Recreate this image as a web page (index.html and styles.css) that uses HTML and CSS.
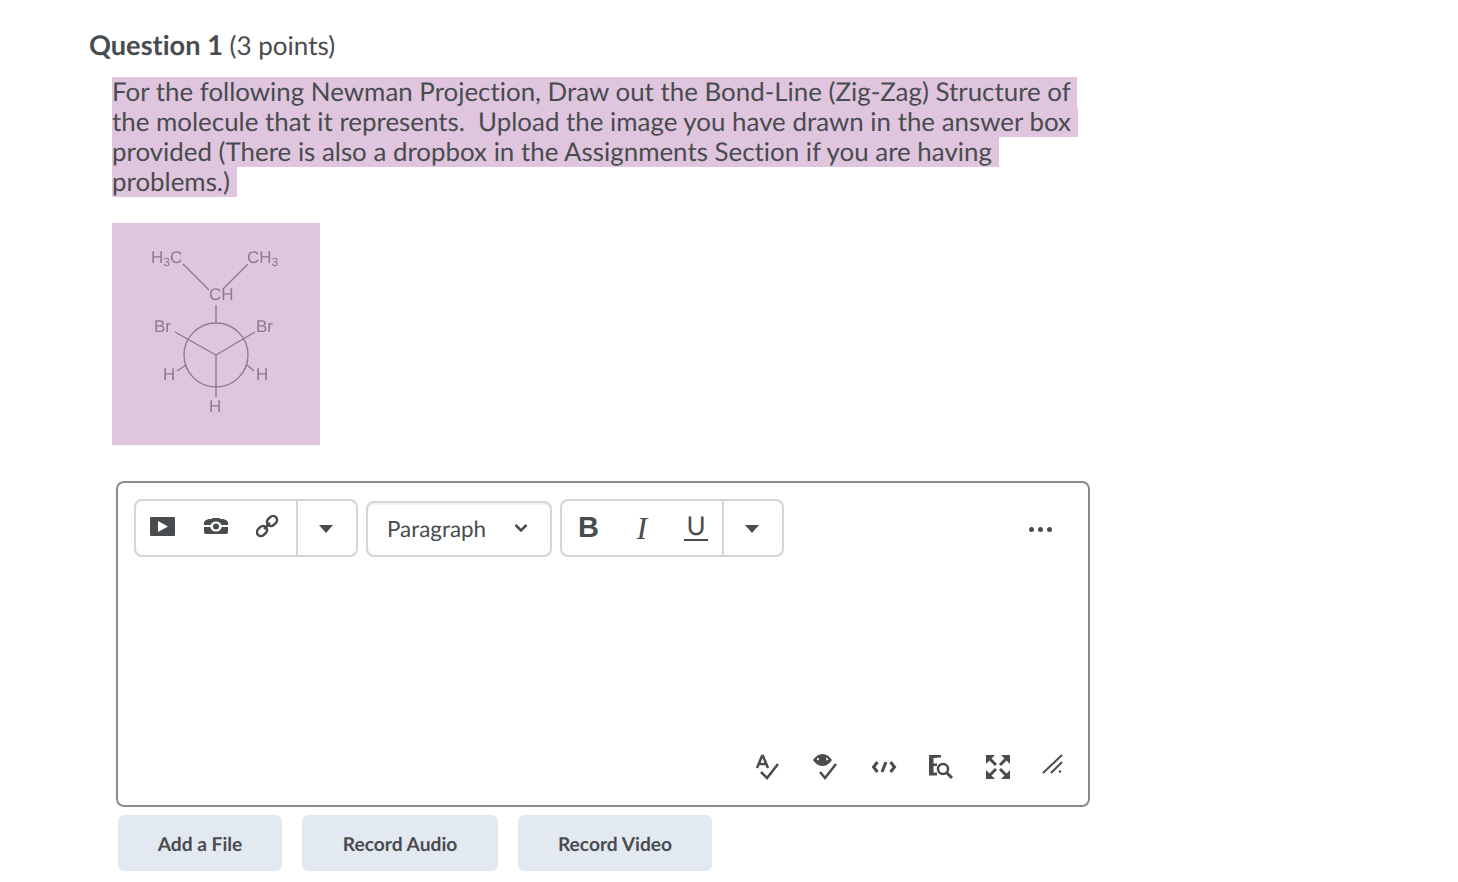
FILE: index.html
```html
<!DOCTYPE html>
<html lang="en">
<head>
    <meta charset="UTF-8">
    <title>Question 1</title>
    <link rel="stylesheet" href="styles.css">
</head>
<body>
    <div class="container">
        <h1 class="question-title"><strong>Question 1</strong> (3 points)</h1>

        <div class="question-body">
            <p class="prompt">
                <span class="hl-line">For the following Newman Projection, Draw out the Bond-Line (Zig-Zag) Structure of&nbsp;</span>
                <span class="hl-line">the molecule that it represents.&nbsp; Upload the image you have drawn in the answer box&nbsp;</span>
                <span class="hl-line">provided (There is also a dropbox in the Assignments Section if you are having&nbsp;</span>
                <span class="hl-line">problems.)&nbsp;</span>
            </p>

            <div class="molecule">
                <svg class="molecule-svg" width="208" height="222" viewBox="0 0 208 222">
                    <g class="bonds">
                        <circle cx="104" cy="132" r="32"/>
                        <path d="M104 132V174M104 82V100M63 109L104 132L143 109M65 148L74 142M142 148L135 142M71 41L97 67M136 41L111 66"/>
                    </g>
                    <g class="atoms">
                        <text x="39" y="40">H<tspan class="sub" dy="3">3</tspan><tspan dy="-3">C</tspan></text>
                        <text x="135" y="40">CH<tspan class="sub" dy="3">3</tspan></text>
                        <text x="97" y="77">CH</text>
                        <text x="42" y="109">Br</text>
                        <text x="144" y="109">Br</text>
                        <text x="51" y="157">H</text>
                        <text x="144" y="157">H</text>
                        <text x="97" y="189">H</text>
                    </g>
                </svg>
            </div>

            <div class="editor">
                <div class="toolbar">
                    <div class="tool-group">
                        <span class="tool">
                            <svg width="26" height="20" viewBox="0 0 26 20"><path class="fill" fill-rule="evenodd" d="M1 1H24a1 1 0 0 1 1 1V19a1 1 0 0 1-1 1H1a1 1 0 0 1-1-1V2a1 1 0 0 1 1-1ZM8 5V16L18 10.500Z"/></svg>
                        </span>
                        <span class="tool">
                            <svg width="26" height="20" viewBox="0 0 26 20"><path class="fill" fill-rule="evenodd" d="M6 3H9V2H17V3H20L23 4Q25 5 25 7V9H18.500A6 6 0 0 0 7.500 9H1V7Q1 5 3 4ZM1 11H7.200A6 6 0 0 0 18.800 11H25V16Q25 18 23 18H3Q1 18 1 16ZM13 7.500A3 3 0 1 0 13 13.500A3 3 0 1 0 13 7.500Z"/></svg>
                        </span>
                        <span class="tool">
                            <svg width="26" height="26" viewBox="0 0 26 26"><g class="line"><rect x="0.500" y="14" width="11" height="8" rx="4" transform="rotate(-45 6 18)"/><rect x="10.500" y="4" width="11" height="8" rx="4" transform="rotate(-45 16 8)"/><path d="M8 16L14 10"/></g></svg>
                        </span>
                        <span class="tool-sep"></span>
                        <span class="tool-more"><span class="caret"></span></span>
                    </div>

                    <div class="format-select">
                        <span>Paragraph</span>
                        <svg width="14" height="10" viewBox="0 0 14 10"><path class="line" d="M1.500 2L7 7.500L12.500 2"/></svg>
                    </div>

                    <div class="tool-group">
                        <span class="tool tool-text"><b class="btn-b">B</b></span>
                        <span class="tool tool-text"><i class="btn-i">I</i></span>
                        <span class="tool"><span class="btn-u">U</span></span>
                        <span class="tool-sep"></span>
                        <span class="tool-more"><span class="caret"></span></span>
                    </div>

                    <div class="toolbar-end">
                        <span class="dot"></span><span class="dot"></span><span class="dot"></span>
                    </div>
                </div>

                <div class="edit-area"></div>

                <div class="status-bar">
                    <span class="status-tool">
                        <svg width="26" height="26" viewBox="0 0 26 26"><path class="line" d="M2 14L7 2H8L13 14M4 10H11"/><path class="line" d="M6 18L12 24L23 10"/></svg>
                    </span>
                    <span class="status-tool">
                        <svg width="26" height="26" viewBox="0 0 26 26"><path class="fill" fill-rule="evenodd" d="M1 6Q5 0 10.500 0Q16 0 20 6Q16 12 10.500 12Q5 12 1 6ZM4.500 5.500Q5.500 4 7 3.500Q6.500 5 7 6.500ZM16.500 5.500Q15.500 4 14 3.500Q14.500 5 14 6.500Z"/><path class="line" d="M8 18L13 24L24 10"/></svg>
                    </span>
                    <span class="status-tool status-code">
                        <svg width="26" height="14" viewBox="0 0 26 14"><path class="line heavy" d="M5.500 2L1.500 7L5.500 12M18.500 2L22.500 7L18.500 12M14 2L10 12"/></svg>
                    </span>
                    <span class="status-tool status-find">
                        <svg width="26" height="26" viewBox="0 0 26 26"><path class="fill" d="M1 1H13V3.500H9V4H5.500V9.500H9V12H5.500V18.500H9V21.500H1Z"/><circle class="line" cx="15" cy="15" r="5"/><path class="line heavy" d="M19 19L24 24"/></svg>
                    </span>
                    <span class="status-tool status-full">
                        <svg width="26" height="26" viewBox="0 0 26 26"><path class="fill" d="M1 1H10L1 10ZM25 1H16L25 10ZM1 25H10L1 16ZM25 25H16L25 16Z"/><path class="line heavy" d="M3 3L11 11M23 3L15 11M3 23L11 15M23 23L15 15"/></svg>
                    </span>
                    <span class="status-tool status-resize">
                        <svg width="24" height="24" viewBox="0 0 24 24"><path class="line thin" d="M2 21L21 3M10 21L21 10"/><path class="line thin" d="M18 20L20 19"/></svg>
                    </span>
                </div>
            </div>

            <div class="attach-buttons">
                <button class="attach-btn btn-file" type="button">Add a File</button>
                <button class="attach-btn btn-audio" type="button">Record Audio</button>
                <button class="attach-btn btn-video" type="button">Record Video</button>
            </div>
        </div>
    </div>
</body>
</html>
```

FILE: styles.css
```css
body {
    font-family: Lato, "Open Sans", sans-serif;
    font-variant-ligatures: none;
    text-rendering: geometricPrecision;
    margin: 0;
    color: #494c4e;
    background-color: white;
}
.container {
    padding: 27px 0 0 89px;
}
.question-title {
    margin: 0;
    font-size: 26px;
    line-height: 36px;
    font-weight: 400;
}
.question-title strong {
    font-size: 27.200px;
    font-weight: 700;
}
.question-body {
    padding-left: 23px;
}
.prompt {
    margin: 14px 0 0;
    font-size: 25.900px;
    line-height: 30px;
}
.hl-line {
    display: block;
    width: fit-content;
    height: 30px;
    line-height: 28px;
    background-color: #dfc5de;
}
.molecule {
    width: 208px;
    height: 222px;
    margin-top: 26px;
    background-color: #dfc5de;
}
.molecule-svg {
    display: block;
    filter: blur(0.4px);
}
.bonds {
    fill: none;
    stroke: #8f7a90;
    stroke-width: 1.4;
}
.atoms {
    font-family: "Liberation Sans", Arial, sans-serif;
    font-size: 17px;
    fill: #8f7a90;
}
.sub {
    font-size: 12px;
}

/* editor */
.editor {
    display: flex;
    flex-direction: column;
    box-sizing: border-box;
    width: 974px;
    height: 326px;
    margin: 36px 0 0 4px;
    border: 2px solid #868c90;
    border-radius: 8px;
}
.toolbar {
    display: flex;
    align-items: flex-start;
    gap: 8px;
    padding: 16px 16px 0;
}
.tool-group {
    display: flex;
    width: 224px;
    height: 58px;
    box-sizing: border-box;
    border: 2px solid #d3d5d6;
    border-radius: 8px;
}
.tool {
    display: flex;
    align-items: center;
    justify-content: center;
    flex: 0 0 53.200px;
    padding-bottom: 4px;
    box-sizing: border-box;
}
.tool-text {
    padding-bottom: 0;
}
.tool-sep {
    width: 2px;
    background-color: #d3d5d6;
}
.tool-more {
    display: flex;
    flex: 1;
    align-items: center;
    justify-content: center;
    padding: 1px 1px 0 0;
}
.caret {
    width: 0;
    height: 0;
    border-left: 7px solid transparent;
    border-right: 7px solid transparent;
    border-top: 8px solid #494c4e;
}
.btn-b {
    font-family: "Liberation Sans", Arial, sans-serif;
    font-weight: 700;
    font-size: 29px;
}
.btn-i {
    font-family: "Liberation Serif", serif;
    font-size: 32px;
}
.btn-u {
    font-size: 26px;
    line-height: 28px;
    border-bottom: 2px solid #494c4e;
    padding: 0 2px;
    margin-left: 2px;
}
.format-select {
    display: flex;
    align-items: center;
    justify-content: space-between;
    box-sizing: border-box;
    width: 186px;
    height: 56px;
    margin-top: 2px;
    padding: 0 22px 2px 19px;
    border: 2px solid #d3d5d6;
    border-radius: 8px;
    box-shadow: inset 0 2px 0 #f1f3f5;
    font-size: 22.400px;
}
.toolbar-end {
    display: flex;
    gap: 4px;
    margin: 28px 20px 0 auto;
}
.dot {
    width: 5px;
    height: 5px;
    border-radius: 50%;
    background-color: #494c4e;
}
.edit-area {
    flex: 1;
}
.status-bar {
    display: flex;
    justify-content: flex-end;
    align-items: center;
    height: 30px;
    padding: 0 7px 23px 0;
}
.status-tool {
    display: flex;
    justify-content: center;
    width: 57px;
}
.status-code {
    padding-left: 6px;
    box-sizing: border-box;
}
.status-find {
    padding-left: 4px;
    box-sizing: border-box;
}
.status-full {
    padding-left: 4px;
    box-sizing: border-box;
}
.status-resize {
    padding-bottom: 6px;
    box-sizing: border-box;
}
.fill {
    fill: #494c4e;
}
.line {
    fill: none;
    stroke: #494c4e;
    stroke-width: 2.500;
}
.line.thin {
    stroke-width: 2;
}
.line.heavy {
    stroke-width: 3;
}

/* attachments */
.attach-buttons {
    display: flex;
    gap: 20px;
    margin: 8px 0 0 6px;
}
.attach-btn {
    height: 56px;
    padding: 2px 0 0;
    border: none;
    border-radius: 6px;
    background-color: #e3e9f1;
    color: #494c4e;
    font-family: Lato, sans-serif;
    font-variant-ligatures: none;
    text-rendering: geometricPrecision;
    font-size: 19.200px;
    font-weight: 700;
}
.btn-file {
    width: 164px;
}
.btn-audio {
    width: 196px;
}
.btn-video {
    width: 194px;
}
```
